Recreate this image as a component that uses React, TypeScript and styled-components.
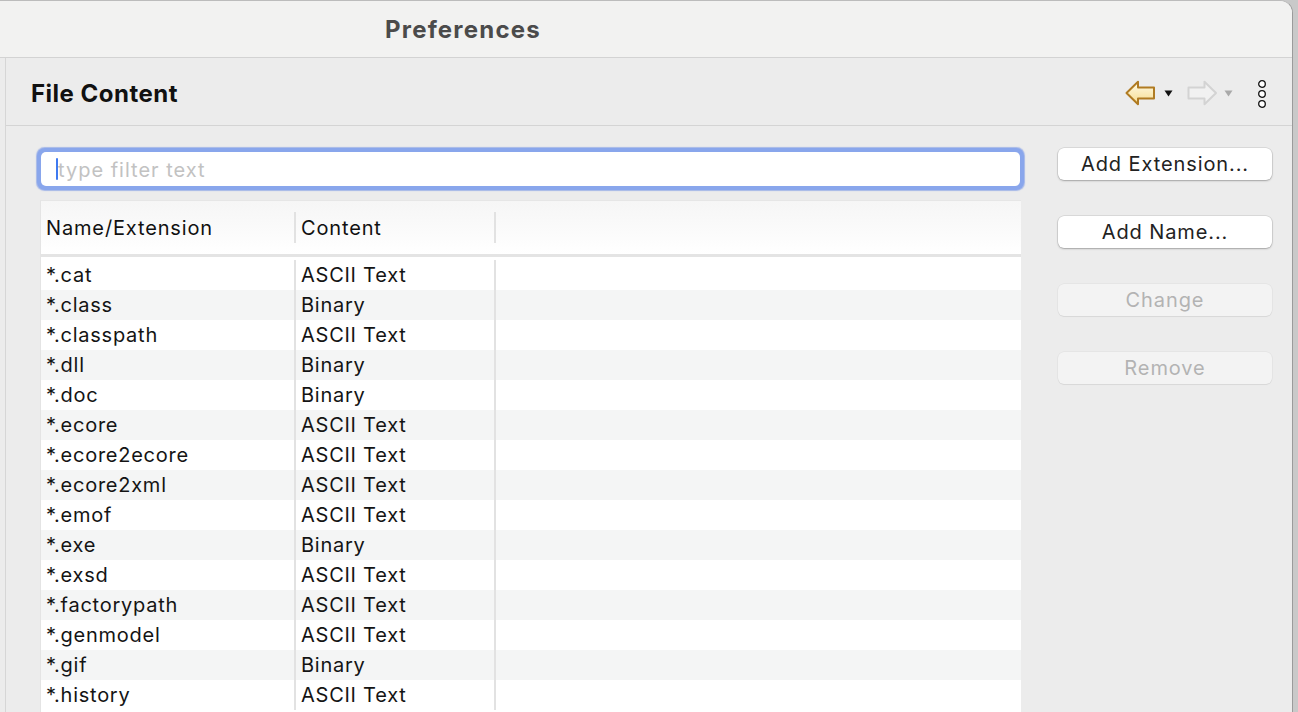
import React from "react";
import styled, { createGlobalStyle } from "styled-components";

const Global = createGlobalStyle`
  html, body { margin: 0; padding: 0; }
  body {
    background: #cfcfcf;
    font-family: Inter, "Liberation Sans", Arial, sans-serif;
    overflow: hidden;
  }
`;

const Screen = styled.div`
  width: 1298px;
  height: 712px;
  display: flex;
  background: #c9c9c9;
  overflow: hidden;
`;

const Window = styled.div`
  width: 1293px;
  height: 712px;
  display: flex;
  flex-direction: column;
  background: #ececec;
  border-top: 1px solid #bcbcbc;
  border-right: 1px solid #9b9b9b;
  border-top-right-radius: 13px;
  box-sizing: border-box;
  overflow: hidden;
`;

const TitleBar = styled.div`
  height: 57px;
  flex: none;
  display: flex;
  align-items: center;
  padding-left: 385px;
  background: #f2f2f1;
  border-bottom: 1px solid #d3d3d3;
  box-sizing: border-box;
`;

const TitleText = styled.div`
  font-size: 24px;
  font-weight: 700;
  color: #4b4b4b;
  letter-spacing: 1.2px;
`;

const Body = styled.div`
  flex: 1;
  display: flex;
  min-height: 0;
`;

const Gutter = styled.div`
  width: 5px;
  flex: none;
  background: #ececec;
  border-right: 1px solid #d6d6d6;
`;

const Pane = styled.div`
  flex: 1;
  display: flex;
  flex-direction: column;
  min-width: 0;
`;

const PageHeader = styled.div`
  height: 68px;
  flex: none;
  display: flex;
  align-items: center;
  justify-content: space-between;
  padding: 0 25px 0 25px;
  border-bottom: 1px solid #d4d4d4;
  box-sizing: border-box;
`;

const PageTitle = styled.div`
  font-size: 24px;
  font-weight: 700;
  color: #111;
  letter-spacing: 0.5px;
  margin-top: 4px;
`;

const NavBar = styled.div`
  display: flex;
  align-items: center;
  margin-top: 4px;
`;

const NavIcon = styled.svg<{ $gap?: number }>`
  display: block;
  margin-left: ${(p) => p.$gap ?? 0}px;
`;

const Content = styled.div`
  flex: 1;
  display: flex;
  gap: 34px;
  padding: 22px 21px 0 31px;
  min-height: 0;
`;

const LeftColumn = styled.div`
  width: 987px;
  flex: none;
  display: flex;
  flex-direction: column;
  gap: 10px;
  min-height: 0;
`;

const FilterBox = styled.div`
  height: 42px;
  border-radius: 8px;
  background: #89a6ec;
  padding: 4px;
  box-sizing: border-box;
  box-shadow: 0 0 1px 0.5px rgba(120, 150, 230, 0.6);
`;

const FilterInner = styled.div`
  height: 100%;
  background: #fff;
  border-radius: 5px;
  display: flex;
  align-items: center;
  padding-left: 15px;
  box-sizing: border-box;
`;

const Caret = styled.div`
  width: 2px;
  height: 22px;
  border-radius: 1px;
  background: #3f7af0;
`;

const Placeholder = styled.span`
  font-size: 20px;
  color: #c2c2c2;
  letter-spacing: 1px;
  margin-top: 1px;
`;

const Table = styled.div`
  flex: 1;
  margin: 0 3px;
  background: #fff;
  border-left: 1px solid #e4e4e4;
  border-top: 1px solid #e6e6e6;
  display: flex;
  flex-direction: column;
  overflow: hidden;
`;

const columns = "255px 200px 1fr";

const HeaderRow = styled.div`
  height: 53px;
  flex: none;
  display: grid;
  grid-template-columns: ${columns};
  align-items: center;
  background: linear-gradient(#f6f6f6, #fbfbfb 60%, #fff);
  border-bottom: 3px solid #e4e4e4;
`;

const HeaderCell = styled.div<{ $sep?: boolean }>`
  height: 31px;
  display: flex;
  align-items: center;
  padding-left: 5px;
  font-size: 20px;
  letter-spacing: 0.85px;
  color: #111;
  border-right: ${(p) => (p.$sep ? "2px solid #e2e2e2" : "none")};
`;

const Rows = styled.div`
  padding-top: 3px;
  display: flex;
  flex-direction: column;
`;

const Row = styled.div<{ $alt: boolean }>`
  height: 30px;
  display: grid;
  grid-template-columns: ${columns};
  background: ${(p) => (p.$alt ? "#f4f5f5" : "#fff")};
`;

const Cell = styled.div<{ $sep?: boolean }>`
  display: flex;
  align-items: center;
  padding-left: 5px;
  font-size: 20px;
  letter-spacing: 0.75px;
  color: #141414;
  border-right: ${(p) => (p.$sep ? "2px solid #e2e2e2" : "none")};
`;

const RightColumn = styled.div`
  width: 214px;
  flex: none;
  display: flex;
  flex-direction: column;
  gap: 36px;
`;

const Button = styled.div<{ $disabled?: boolean }>`
  height: 32px;
  border-radius: 6px;
  display: flex;
  align-items: center;
  justify-content: center;
  font-size: 20px;
  letter-spacing: 0.9px;
  color: ${(p) => (p.$disabled ? "#b3b3b3" : "#222")};
  background: ${(p) => (p.$disabled ? "#f3f3f3" : "#fff")};
  box-shadow: ${(p) =>
    p.$disabled
      ? "0 0 0 0.5px rgba(0,0,0,0.06), 0 1px 1px rgba(0,0,0,0.06)"
      : "0 0 0 0.5px rgba(0,0,0,0.14), 0 1px 2px rgba(0,0,0,0.25)"};
`;

const rows: [string, string][] = [
  ["*.cat", "ASCII Text"],
  ["*.class", "Binary"],
  ["*.classpath", "ASCII Text"],
  ["*.dll", "Binary"],
  ["*.doc", "Binary"],
  ["*.ecore", "ASCII Text"],
  ["*.ecore2ecore", "ASCII Text"],
  ["*.ecore2xml", "ASCII Text"],
  ["*.emof", "ASCII Text"],
  ["*.exe", "Binary"],
  ["*.exsd", "ASCII Text"],
  ["*.factorypath", "ASCII Text"],
  ["*.genmodel", "ASCII Text"],
  ["*.gif", "Binary"],
  ["*.history", "ASCII Text"],
];

const ArrowPath = "M1.5 13 L13 1.8 L13 7.5 L29 7.5 L29 18.5 L13 18.5 L13 24.2 Z";

export default function App() {
  return (
    <>
      <Global />
      <Screen>
        <Window>
          <TitleBar>
            <TitleText>Preferences</TitleText>
          </TitleBar>
          <Body>
            <Gutter />
            <Pane>
              <PageHeader>
                <PageTitle>File Content</PageTitle>
                <NavBar>
                  <NavIcon width="31" height="27" viewBox="0 0 31 27">
                    <defs>
                      <linearGradient id="bk" x1="0" y1="0" x2="0" y2="1">
                        <stop offset="0" stopColor="#fffbe8" />
                        <stop offset="1" stopColor="#f7dc8e" />
                      </linearGradient>
                    </defs>
                    <path d={ArrowPath} fill="url(#bk)" stroke="#b07b22" strokeWidth="2" strokeLinejoin="round" />
                  </NavIcon>
                  <NavIcon $gap={8} width="9" height="7" viewBox="0 0 9 7">
                    <path d="M0.5 0.5 L8.5 0.5 L4.5 6.5 Z" fill="#111" />
                  </NavIcon>
                  <NavIcon $gap={14} width="31" height="27" viewBox="0 0 31 27">
                    <path d={ArrowPath} transform="translate(30.5 0) scale(-1 1)" fill="#f1f1f1" stroke="#d3d3d3" strokeWidth="2" strokeLinejoin="round" />
                  </NavIcon>
                  <NavIcon $gap={6} width="9" height="7" viewBox="0 0 9 7">
                    <path d="M0.5 0.5 L8.5 0.5 L4.5 6.5 Z" fill="#a9a9a9" />
                  </NavIcon>
                  <NavIcon $gap={24} width="10" height="28" viewBox="0 0 10 28">
                    <circle cx="5" cy="4" r="3.3" fill="#fff" stroke="#111" strokeWidth="1.3" />
                    <circle cx="5" cy="14" r="3.3" fill="#fff" stroke="#111" strokeWidth="1.3" />
                    <circle cx="5" cy="24" r="3.3" fill="#fff" stroke="#111" strokeWidth="1.3" />
                  </NavIcon>
                </NavBar>
              </PageHeader>
              <Content>
                <LeftColumn>
                  <FilterBox>
                    <FilterInner>
                      <Caret />
                      <Placeholder>type filter text</Placeholder>
                    </FilterInner>
                  </FilterBox>
                  <Table>
                    <HeaderRow>
                      <HeaderCell $sep>Name/Extension</HeaderCell>
                      <HeaderCell $sep>Content</HeaderCell>
                      <HeaderCell />
                    </HeaderRow>
                    <Rows>
                      {rows.map(([n, c], i) => (
                        <Row key={n} $alt={i % 2 === 1}>
                          <Cell $sep>{n}</Cell>
                          <Cell $sep>{c}</Cell>
                          <Cell />
                        </Row>
                      ))}
                    </Rows>
                  </Table>
                </LeftColumn>
                <RightColumn>
                  <Button>Add Extension...</Button>
                  <Button>Add Name...</Button>
                  <Button $disabled>Change</Button>
                  <Button $disabled>Remove</Button>
                </RightColumn>
              </Content>
            </Pane>
          </Body>
        </Window>
      </Screen>
    </>
  );
}
